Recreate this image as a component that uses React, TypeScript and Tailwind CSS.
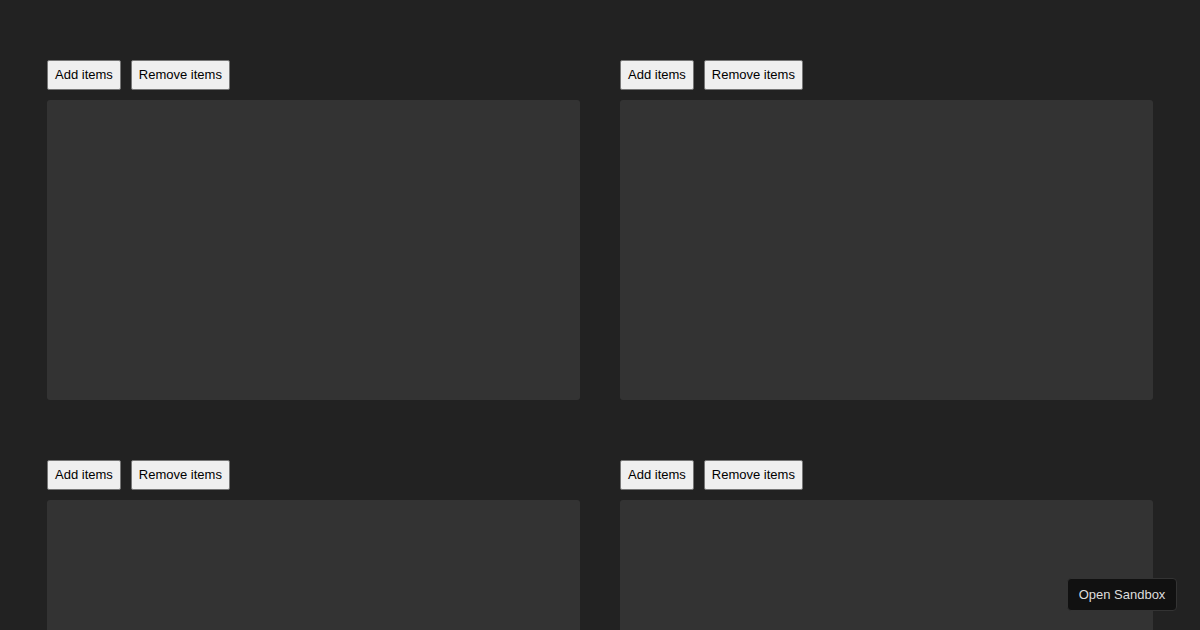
import React from "react";

function Section() {
  return (
    <div className="flex flex-col gap-[10px]">
      <div className="flex gap-[10px] h-[30px]">
        <button className="h-[30px] px-[7px] pb-[2px] bg-[#efefef] border border-[#767676] rounded-[2px] text-[13px] text-black leading-none">
          Add items
        </button>
        <button className="h-[30px] px-[7px] pb-[2px] bg-[#efefef] border border-[#767676] rounded-[2px] text-[13px] text-black leading-none">
          Remove items
        </button>
      </div>
      <div className="h-[300px] bg-[#333333] rounded-[3px]" />
    </div>
  );
}

export default function App() {
  return (
    <div
      className="w-[1200px] h-[630px] overflow-hidden bg-[#222222] relative"
      style={{ fontFamily: '"Liberation Sans", Arial, sans-serif' }}
    >
      <div className="grid grid-cols-2 gap-x-[40px] gap-y-[60px] px-[47px] pt-[60px]">
        <Section />
        <Section />
        <Section />
        <Section />
      </div>
      <button className="absolute left-[1067px] top-[578px] w-[110px] h-[33px] bg-[#111111] border border-[#333333] rounded-[4px] text-[13px] text-[#dddddd]">
        Open Sandbox
      </button>
    </div>
  );
}
